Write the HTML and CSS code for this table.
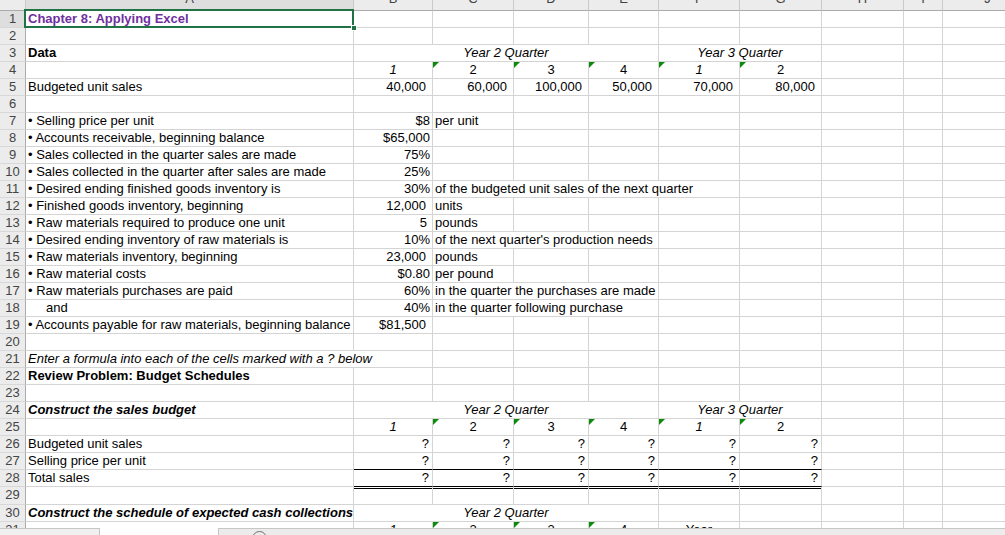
FILE: index.html
```html
<!DOCTYPE html>
<html>
<head>
<meta charset="utf-8">
<link rel="stylesheet" href="styles.css">
</head>
<body>
<div class="app">
  <div class="sheet">
    <div class="row hdr">
      <div class="corner"></div>
      <div class="ch sel-h">A</div><div class="ch">B</div><div class="ch">C</div><div class="ch">D</div><div class="ch">E</div><div class="ch">F</div><div class="ch">G</div><div class="ch">H</div><div class="ch">I</div><div class="ch">J</div>
    </div>

    <div class="row"><div class="rh sel-h">1</div><div class="c sel b purple">Chapter 8: Applying Excel<span class="selbox"></span><span class="handle"></span></div><div class="c"></div><div class="c"></div><div class="c"></div><div class="c"></div><div class="c"></div><div class="c"></div><div class="c"></div><div class="c"></div><div class="c"></div></div>

    <div class="row"><div class="rh">2</div><div class="c"></div><div class="c"></div><div class="c"></div><div class="c"></div><div class="c"></div><div class="c"></div><div class="c"></div><div class="c"></div><div class="c"></div><div class="c"></div></div>

    <div class="row"><div class="rh">3</div><div class="c b">Data</div><div class="c s4 ctr i">Year 2 Quarter</div><div class="c s2 ctr i">Year 3 Quarter</div><div class="c"></div><div class="c"></div><div class="c"></div></div>

    <div class="row"><div class="rh">4</div><div class="c"></div><div class="c ctr i">1</div><div class="c ctr tri">2</div><div class="c ctr tri">3</div><div class="c ctr tri">4</div><div class="c ctr i tri">1</div><div class="c ctr tri">2</div><div class="c"></div><div class="c"></div><div class="c"></div></div>

    <div class="row"><div class="rh">5</div><div class="c">Budgeted unit sales</div><div class="c n">40,000</div><div class="c n">60,000</div><div class="c n">100,000</div><div class="c n">50,000</div><div class="c n">70,000</div><div class="c n">80,000</div><div class="c"></div><div class="c"></div><div class="c"></div></div>

    <div class="row"><div class="rh">6</div><div class="c"></div><div class="c"></div><div class="c"></div><div class="c"></div><div class="c"></div><div class="c"></div><div class="c"></div><div class="c"></div><div class="c"></div><div class="c"></div></div>

    <div class="row"><div class="rh">7</div><div class="c">• Selling price per unit</div><div class="c r">$8</div><div class="c">per unit</div><div class="c"></div><div class="c"></div><div class="c"></div><div class="c"></div><div class="c"></div><div class="c"></div><div class="c"></div></div>

    <div class="row"><div class="rh">8</div><div class="c">• Accounts receivable, beginning balance</div><div class="c r">$65,000</div><div class="c"></div><div class="c"></div><div class="c"></div><div class="c"></div><div class="c"></div><div class="c"></div><div class="c"></div><div class="c"></div></div>

    <div class="row"><div class="rh">9</div><div class="c">• Sales collected in the quarter sales are made</div><div class="c r">75%</div><div class="c"></div><div class="c"></div><div class="c"></div><div class="c"></div><div class="c"></div><div class="c"></div><div class="c"></div><div class="c"></div></div>

    <div class="row"><div class="rh">10</div><div class="c">• Sales collected in the quarter after sales are made</div><div class="c r">25%</div><div class="c"></div><div class="c"></div><div class="c"></div><div class="c"></div><div class="c"></div><div class="c"></div><div class="c"></div><div class="c"></div></div>

    <div class="row"><div class="rh">11</div><div class="c">• Desired ending finished goods inventory is</div><div class="c r">30%</div><div class="c s4">of the budgeted unit sales of the next quarter</div><div class="c"></div><div class="c"></div><div class="c"></div><div class="c"></div></div>

    <div class="row"><div class="rh">12</div><div class="c">• Finished goods inventory, beginning</div><div class="c n">12,000</div><div class="c">units</div><div class="c"></div><div class="c"></div><div class="c"></div><div class="c"></div><div class="c"></div><div class="c"></div><div class="c"></div></div>

    <div class="row"><div class="rh">13</div><div class="c">• Raw materials required to produce one unit</div><div class="c n5">5</div><div class="c">pounds</div><div class="c"></div><div class="c"></div><div class="c"></div><div class="c"></div><div class="c"></div><div class="c"></div><div class="c"></div></div>

    <div class="row"><div class="rh">14</div><div class="c">• Desired ending inventory of raw materials is</div><div class="c r">10%</div><div class="c s3">of the next quarter's production needs</div><div class="c"></div><div class="c"></div><div class="c"></div><div class="c"></div><div class="c"></div></div>

    <div class="row"><div class="rh">15</div><div class="c">• Raw materials inventory, beginning</div><div class="c n">23,000</div><div class="c">pounds</div><div class="c"></div><div class="c"></div><div class="c"></div><div class="c"></div><div class="c"></div><div class="c"></div><div class="c"></div></div>

    <div class="row"><div class="rh">16</div><div class="c">• Raw material costs</div><div class="c r">$0.80</div><div class="c">per pound</div><div class="c"></div><div class="c"></div><div class="c"></div><div class="c"></div><div class="c"></div><div class="c"></div><div class="c"></div></div>

    <div class="row"><div class="rh">17</div><div class="c">• Raw materials purchases are paid</div><div class="c r">60%</div><div class="c s3">in the quarter the purchases are made</div><div class="c"></div><div class="c"></div><div class="c"></div><div class="c"></div><div class="c"></div></div>

    <div class="row"><div class="rh">18</div><div class="c ind">and</div><div class="c r">40%</div><div class="c s3">in the quarter following purchase</div><div class="c"></div><div class="c"></div><div class="c"></div><div class="c"></div><div class="c"></div></div>

    <div class="row"><div class="rh">19</div><div class="c">• Accounts payable for raw materials, beginning balance</div><div class="c n">$81,500</div><div class="c"></div><div class="c"></div><div class="c"></div><div class="c"></div><div class="c"></div><div class="c"></div><div class="c"></div><div class="c"></div></div>

    <div class="row"><div class="rh">20</div><div class="c"></div><div class="c"></div><div class="c"></div><div class="c"></div><div class="c"></div><div class="c"></div><div class="c"></div><div class="c"></div><div class="c"></div><div class="c"></div></div>

    <div class="row"><div class="rh">21</div><div class="c s2 i">Enter a formula into each of the cells marked with a ? below</div><div class="c"></div><div class="c"></div><div class="c"></div><div class="c"></div><div class="c"></div><div class="c"></div><div class="c"></div><div class="c"></div></div>

    <div class="row"><div class="rh">22</div><div class="c b">Review Problem: Budget Schedules</div><div class="c"></div><div class="c"></div><div class="c"></div><div class="c"></div><div class="c"></div><div class="c"></div><div class="c"></div><div class="c"></div><div class="c"></div></div>

    <div class="row"><div class="rh">23</div><div class="c"></div><div class="c"></div><div class="c"></div><div class="c"></div><div class="c"></div><div class="c"></div><div class="c"></div><div class="c"></div><div class="c"></div><div class="c"></div></div>

    <div class="row"><div class="rh">24</div><div class="c b i">Construct the sales budget</div><div class="c s4 ctr i">Year 2 Quarter</div><div class="c s2 ctr i">Year 3 Quarter</div><div class="c"></div><div class="c"></div><div class="c"></div></div>

    <div class="row"><div class="rh">25</div><div class="c"></div><div class="c ctr i">1</div><div class="c ctr tri">2</div><div class="c ctr tri">3</div><div class="c ctr tri">4</div><div class="c ctr i tri">1</div><div class="c ctr tri">2</div><div class="c"></div><div class="c"></div><div class="c"></div></div>

    <div class="row"><div class="rh">26</div><div class="c">Budgeted unit sales</div><div class="c q">?</div><div class="c q">?</div><div class="c q">?</div><div class="c q">?</div><div class="c q">?</div><div class="c q">?</div><div class="c"></div><div class="c"></div><div class="c"></div></div>

    <div class="row"><div class="rh">27</div><div class="c">Selling price per unit</div><div class="c q ul">?</div><div class="c q ul">?</div><div class="c q ul">?</div><div class="c q ul">?</div><div class="c q ul">?</div><div class="c q ul">?</div><div class="c"></div><div class="c"></div><div class="c"></div></div>

    <div class="row"><div class="rh">28</div><div class="c">Total sales</div><div class="c q ul">?</div><div class="c q ul">?</div><div class="c q ul">?</div><div class="c q ul">?</div><div class="c q ul">?</div><div class="c q ul">?</div><div class="c"></div><div class="c"></div><div class="c"></div></div>

    <div class="row tall"><div class="rh">29</div><div class="c"></div><div class="c dbl"></div><div class="c dbl"></div><div class="c dbl"></div><div class="c dbl"></div><div class="c dbl"></div><div class="c dbl"></div><div class="c"></div><div class="c"></div><div class="c"></div></div>

    <div class="row"><div class="rh">30</div><div class="c b i">Construct the schedule of expected cash collections</div><div class="c s4 ctr i">Year 2 Quarter</div><div class="c"></div><div class="c"></div><div class="c"></div><div class="c"></div><div class="c"></div></div>

    <div class="row"><div class="rh">31</div><div class="c"></div><div class="c ctr i">1</div><div class="c ctr tri">2</div><div class="c ctr tri">3</div><div class="c ctr tri">4</div><div class="c ctr">Year</div><div class="c"></div><div class="c"></div><div class="c"></div><div class="c"></div></div>
  </div>

  <div class="tabbar">
    <div class="nav"></div>
    <div class="tab"></div>
    <div class="rest"><span class="plus"></span></div>
  </div>
</div>
</body>
</html>
```

FILE: styles.css
```css
* { box-sizing: border-box; }

html, body {
  margin: 0;
  padding: 0;
  background: #ffffff;
}

body {
  width: 1005px;
  height: 535px;
  overflow: hidden;
  font-family: "Liberation Sans", Arial, sans-serif;
  font-size: 13px;
  color: #000;
}

.app {
  display: flex;
  flex-direction: column;
  height: 535px;
}

.sheet {
  height: 528px;
  overflow: hidden;
  flex: none;
}

.row {
  display: grid;
  grid-template-columns: 26px 328px 79px 81px 75px 70px 81px 82px 82px 39px 90px;
  grid-auto-rows: 17px;
}

.row.tall {
  grid-auto-rows: 18px;
}

.hdr {
  margin-top: -10px;
  grid-auto-rows: 21px;
}

.corner,
.ch {
  background: #ececec;
  border-right: 1px solid #c9c9c9;
  border-bottom: 1px solid #ababab;
}

.ch {
  text-align: center;
  font-size: 13px;
  line-height: 18px;
  color: #444;
}

.ch.sel-h {
  background: #dedede;
}

.rh {
  background: #ececec;
  border-right: 1px solid #ababab;
  border-bottom: 1px solid #d8d8d8;
  text-align: center;
  font-size: 13px;
  line-height: 16px;
  color: #444;
}

.rh.sel-h {
  background: #dedede;
}

.c {
  position: relative;
  border-right: 1px solid #d4d4d4;
  border-bottom: 1px solid #d4d4d4;
  padding: 0 2px;
  line-height: 16px;
  white-space: nowrap;
  overflow: hidden;
}

.s2 { grid-column: span 2; }
.s3 { grid-column: span 3; }
.s4 { grid-column: span 4; }

.r { text-align: right; }
.n { text-align: right; padding-right: 6px; }
.n5 { text-align: right; padding-right: 5px; }
.q { text-align: right; padding-right: 3px; }
.ctr { text-align: center; }
.b { font-weight: bold; }
.i { font-style: italic; }
.ind { padding-left: 20px; }
.purple { color: #7030a0; }

.ul { border-bottom-color: #000; }

.dbl {
  box-shadow: inset 0 1px 0 #ffffff, inset 0 2px 0 #000000;
}

.tri::before {
  content: "";
  position: absolute;
  left: 0;
  top: 0;
  border-top: 6px solid #0b8a0b;
  border-right: 6px solid transparent;
}

.sel {
  overflow: visible;
  z-index: 2;
}

.selbox {
  position: absolute;
  left: -2px;
  top: -2px;
  right: -1px;
  bottom: -1px;
  border: 2px solid #217346;
  pointer-events: none;
}

.handle {
  position: absolute;
  right: -4px;
  bottom: -4px;
  width: 6px;
  height: 6px;
  background: #217346;
  border: 1px solid #ffffff;
}

.tabbar {
  display: flex;
  height: 7px;
  flex: none;
  background: #e6e6e6;
  border-top: 1px solid #c6c6c6;
}

.nav {
  width: 100px;
  background: #f0f0f0;
  border-right: 1px solid #c6c6c6;
}

.tab {
  width: 118px;
  background: #ffffff;
  margin-top: -1px;
}

.rest {
  flex: 1;
  background: #ececec;
  border-left: 1px solid #c6c6c6;
  padding-left: 33px;
}

.plus {
  display: block;
  width: 15px;
  height: 15px;
  margin-top: 2px;
  border: 1px solid #6f6f6f;
  border-radius: 50%;
}
```
